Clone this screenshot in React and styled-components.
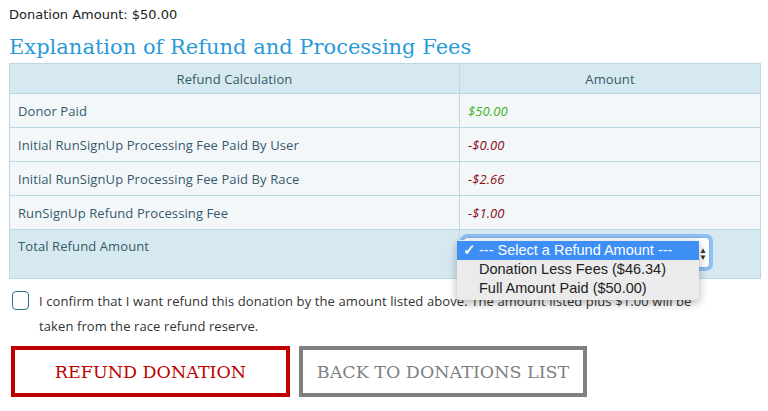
import styled, { createGlobalStyle } from "styled-components";

const GlobalStyle = createGlobalStyle`
  body {
    margin: 0;
    background: #fff;
  }
`

const Page = styled.div`
  box-sizing: border-box;
  width: 768px;
  padding: 7px 7px 0 9px;
  font-family: "Open Sans", sans-serif;
`
const AmountLine = styled.div`
  font-family: "DejaVu Sans", sans-serif;
  font-size: 13px;
  color: #222;
  line-height: 16px;
`
const Heading = styled.h2`
  margin: 12px 0 3px 0;
  font-family: "DejaVu Serif", serif;
  font-weight: normal;
  font-size: 21px;
  line-height: 25px;
  color: #2a9ad8;
`
const FeeTable = styled.table`
  width: 752px;
  table-layout: fixed;
  border-collapse: collapse;
  font-size: 13px;
  letter-spacing: 0.1px;
  color: #36596b;
`
const HeadCell = styled.th`
  height: 29px;
  padding: 0 8px;
  font-weight: normal;
  background: #d6e9f0;
  border: 1px solid #bcd8e2;
  width: ${p => p.$w || "auto"};
`
const Row = styled.tr`
  background: ${p => (p.$total ? "#d6e9f0" : "#f3f7fa")};
`
const Cell = styled.td`
  height: ${p => (p.$tall ? "49px" : "34px")};
  padding: ${p => (p.$tall ? "7px 8px 0" : "0 8px")};
  vertical-align: ${p => (p.$tall ? "top" : "middle")};
  border: 1px solid #bcd8e2;
  box-sizing: border-box;
  position: relative;
`
const Money = styled.span`
  font-style: italic;
  color: ${p => (p.$plus ? "#3cb521" : "#8a0d14")};
`
const SelectBox = styled.div`
  position: absolute;
  left: 3px;
  top: 7px;
  width: 247px;
  height: 31px;
  box-sizing: border-box;
  border-radius: 4px;
  background: #fff;
  border: 1px solid #7ab3ef;
  box-shadow: 0 0 0 3px #8ebff5;
`
const Arrows = styled.span`
  position: absolute;
  right: 2px;
  top: 8px;
  font-size: 8px;
  line-height: 7px;
  color: #333;
`
const Menu = styled.ul`
  position: absolute;
  left: -3px;
  top: 10px;
  width: 242px;
  margin: 0;
  padding: 1px 0 2px;
  list-style: none;
  background: #ebebeb;
  border-radius: 4px;
  box-shadow: 0 3px 10px rgba(0, 0, 0, 0.3);
  font-family: "Liberation Sans", sans-serif;
  font-size: 14.5px;
  letter-spacing: 0;
  color: #222;
  z-index: 2;
`
const MenuItem = styled.li`
  height: 19px;
  line-height: 19px;
  padding-left: 22px;
  position: relative;
  white-space: nowrap;
  background: ${p => (p.$active ? "#3d8ef5" : "transparent")};
  color: ${p => (p.$active ? "#fff" : "#222")};
`
const Check = styled.span`
  position: absolute;
  left: 6px;
  top: 0;
  font-weight: bold;
`
const Confirm = styled.label`
  display: flex;
  gap: 10px;
  margin-top: 10px;
  padding-left: 3px;
  padding-right: 48px;
  font-size: 13px;
  letter-spacing: 0.1px;
  line-height: 25px;
  color: #333;
`
const Box = styled.span`
  flex: none;
  width: 15px;
  height: 17px;
  margin-top: 2px;
  border: 1.5px solid #2f6f8e;
  border-radius: 4px;
`
const Buttons = styled.div`
  display: flex;
  gap: 9px;
  margin-top: 7px;
  padding-left: 2px;
`
const Button = styled.button`
  box-sizing: border-box;
  height: 51px;
  width: ${p => p.$w};
  background: #fff;
  border: 4px solid ${p => p.$color};
  color: ${p => p.$color};
  font-family: "DejaVu Serif", serif;
  font-size: 17.5px;
  letter-spacing: 0;
  cursor: pointer;
`

const rows = [
  ["Donor Paid", "$50.00", true],
  ["Initial RunSignUp Processing Fee Paid By User", "-$0.00"],
  ["Initial RunSignUp Processing Fee Paid By Race", "-$2.66"],
  ["RunSignUp Refund Processing Fee", "-$1.00"],
]

export default function App() {
  return (
    <>
      <GlobalStyle />
      <Page>
        <AmountLine>Donation Amount: $50.00</AmountLine>
        <Heading>Explanation of Refund and Processing Fees</Heading>
        <FeeTable>
          <thead>
            <tr>
              <HeadCell $w="433px">Refund Calculation</HeadCell>
              <HeadCell>Amount</HeadCell>
            </tr>
          </thead>
          <tbody>
            {rows.map(([label, amt, plus]) => (
              <Row key={label}>
                <Cell>{label}</Cell>
                <Cell><Money $plus={plus}>{amt}</Money></Cell>
              </Row>
            ))}
            <Row $total>
              <Cell $tall>Total Refund Amount</Cell>
              <Cell $tall>
                <SelectBox>
                  <Arrows>▲<br />▼</Arrows>
                </SelectBox>
                <Menu>
                  <MenuItem $active><Check>✓</Check>--- Select a Refund Amount ---</MenuItem>
                  <MenuItem>Donation Less Fees ($46.34)</MenuItem>
                  <MenuItem>Full Amount Paid ($50.00)</MenuItem>
                </Menu>
              </Cell>
            </Row>
          </tbody>
        </FeeTable>
        <Confirm>
          <Box />
          <span>
            I confirm that I want refund this donation by the amount listed above. The amount listed plus $1.00 will be taken from the race refund reserve.
          </span>
        </Confirm>
        <Buttons>
          <Button $w="279px" $color="#c00000">REFUND DONATION</Button>
          <Button $w="288px" $color="#808080">BACK TO DONATIONS LIST</Button>
        </Buttons>
      </Page>
    </>
  )
}
